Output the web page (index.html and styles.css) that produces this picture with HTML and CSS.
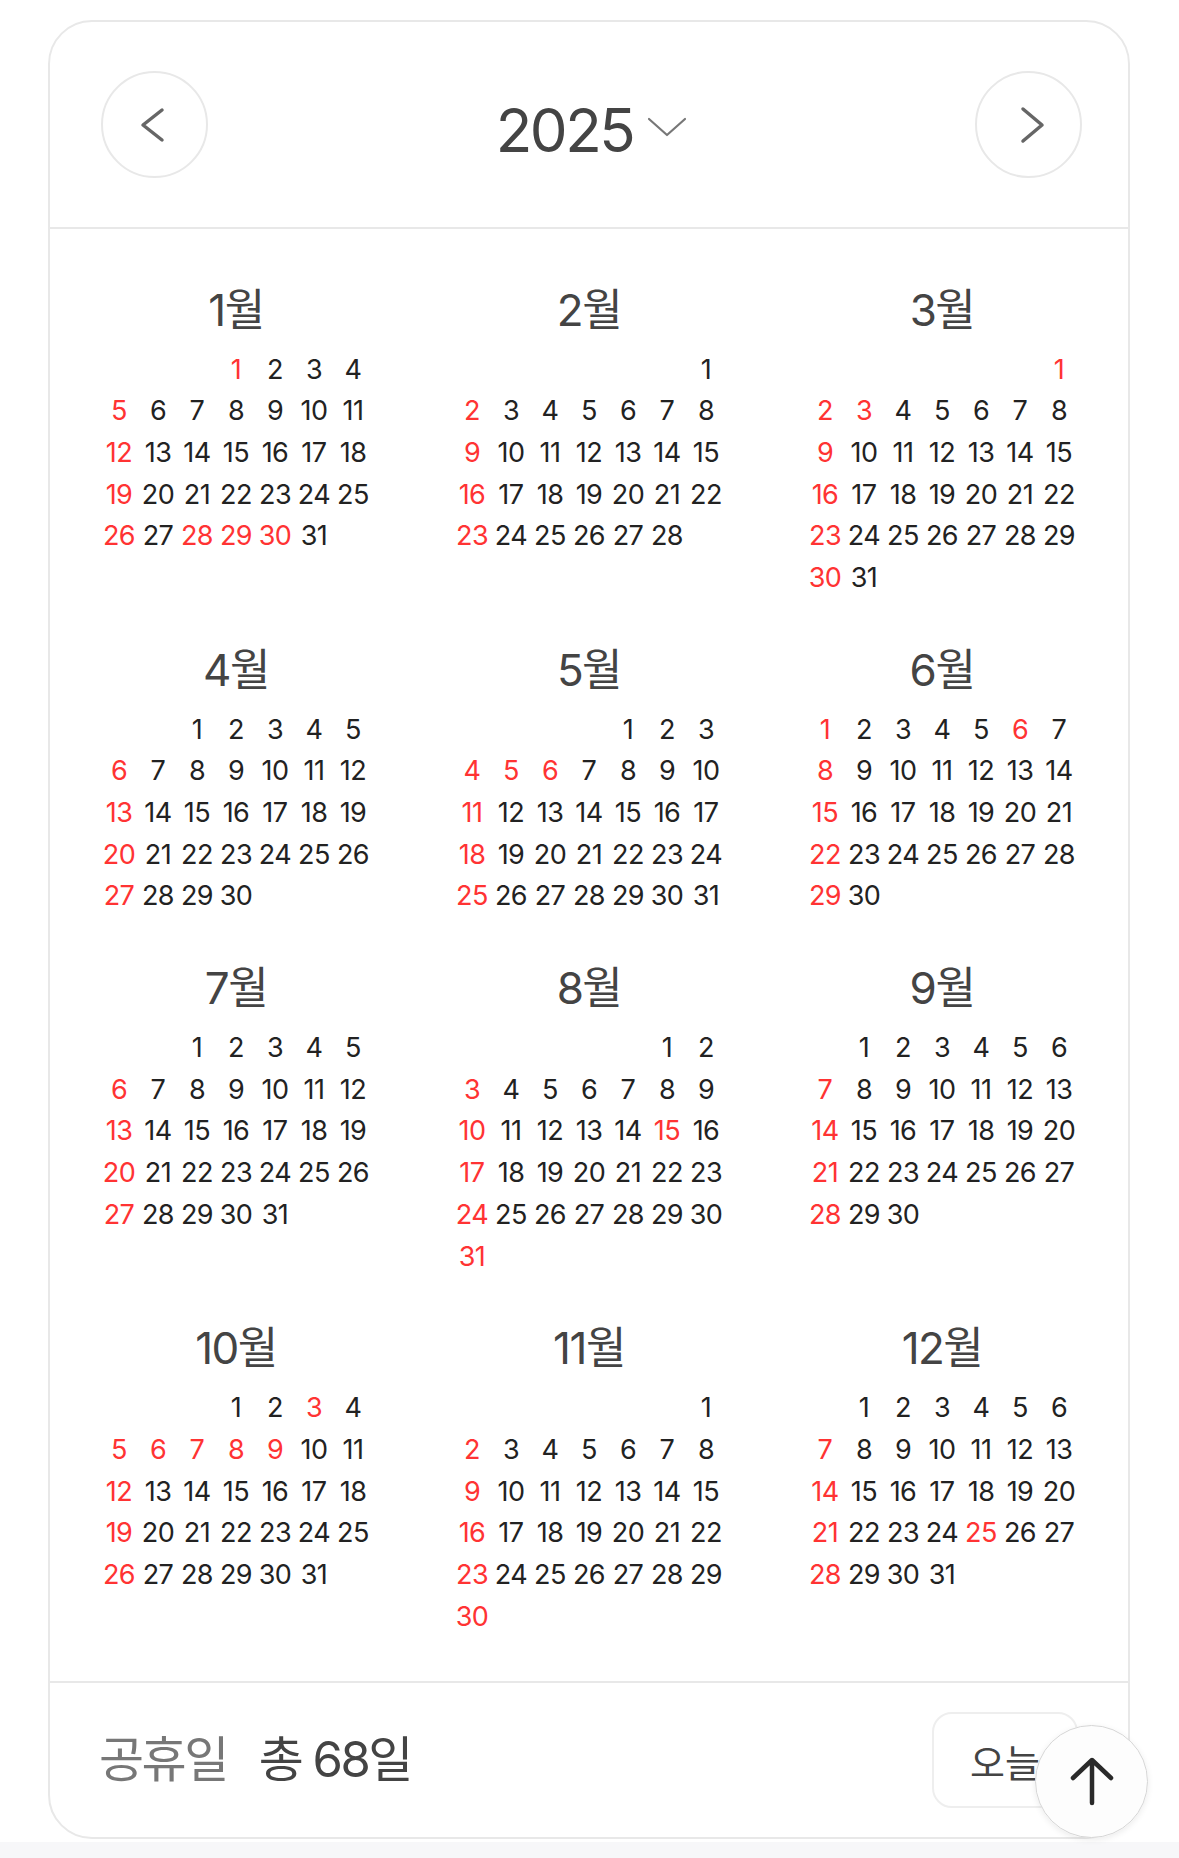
FILE: index.html
```html
<!DOCTYPE html>
<html lang="ko">
<head>
<meta charset="utf-8">
<title>2025 달력</title>
<link rel="stylesheet" href="styles.css">
</head>
<body>
<div class="card">
  <header class="head">
    <button class="nav" aria-label="이전">
      <svg viewBox="0 0 103 103" width="103" height="103"><polyline points="59,37 40,52 59,67" /></svg>
    </button>
    <div class="year">
      <span class="year-num">2025</span>
      <svg class="caret" viewBox="0 0 40 20" width="40" height="20"><polyline points="2,2 20,18 38,2" /></svg>
    </div>
    <button class="nav" aria-label="다음">
      <svg viewBox="0 0 103 103" width="103" height="103"><polyline points="46,36 65,52 46,68" /></svg>
    </button>
  </header>

  <section class="months">
    <div class="month">
      <h2 class="mtitle">1월</h2>
      <ol class="days">
        <li></li><li></li><li></li><li class="r">1</li><li>2</li><li>3</li><li>4</li>
        <li class="r">5</li><li>6</li><li>7</li><li>8</li><li>9</li><li>10</li><li>11</li>
        <li class="r">12</li><li>13</li><li>14</li><li>15</li><li>16</li><li>17</li><li>18</li>
        <li class="r">19</li><li>20</li><li>21</li><li>22</li><li>23</li><li>24</li><li>25</li>
        <li class="r">26</li><li>27</li><li class="r">28</li><li class="r">29</li><li class="r">30</li><li>31</li>
      </ol>
    </div>
    <div class="month">
      <h2 class="mtitle">2월</h2>
      <ol class="days">
        <li></li><li></li><li></li><li></li><li></li><li></li><li>1</li>
        <li class="r">2</li><li>3</li><li>4</li><li>5</li><li>6</li><li>7</li><li>8</li>
        <li class="r">9</li><li>10</li><li>11</li><li>12</li><li>13</li><li>14</li><li>15</li>
        <li class="r">16</li><li>17</li><li>18</li><li>19</li><li>20</li><li>21</li><li>22</li>
        <li class="r">23</li><li>24</li><li>25</li><li>26</li><li>27</li><li>28</li>
      </ol>
    </div>
    <div class="month">
      <h2 class="mtitle">3월</h2>
      <ol class="days">
        <li></li><li></li><li></li><li></li><li></li><li></li><li class="r">1</li>
        <li class="r">2</li><li class="r">3</li><li>4</li><li>5</li><li>6</li><li>7</li><li>8</li>
        <li class="r">9</li><li>10</li><li>11</li><li>12</li><li>13</li><li>14</li><li>15</li>
        <li class="r">16</li><li>17</li><li>18</li><li>19</li><li>20</li><li>21</li><li>22</li>
        <li class="r">23</li><li>24</li><li>25</li><li>26</li><li>27</li><li>28</li><li>29</li>
        <li class="r">30</li><li>31</li>
      </ol>
    </div>

    <div class="month">
      <h2 class="mtitle">4월</h2>
      <ol class="days">
        <li></li><li></li><li>1</li><li>2</li><li>3</li><li>4</li><li>5</li>
        <li class="r">6</li><li>7</li><li>8</li><li>9</li><li>10</li><li>11</li><li>12</li>
        <li class="r">13</li><li>14</li><li>15</li><li>16</li><li>17</li><li>18</li><li>19</li>
        <li class="r">20</li><li>21</li><li>22</li><li>23</li><li>24</li><li>25</li><li>26</li>
        <li class="r">27</li><li>28</li><li>29</li><li>30</li>
      </ol>
    </div>
    <div class="month">
      <h2 class="mtitle">5월</h2>
      <ol class="days">
        <li></li><li></li><li></li><li></li><li>1</li><li>2</li><li>3</li>
        <li class="r">4</li><li class="r">5</li><li class="r">6</li><li>7</li><li>8</li><li>9</li><li>10</li>
        <li class="r">11</li><li>12</li><li>13</li><li>14</li><li>15</li><li>16</li><li>17</li>
        <li class="r">18</li><li>19</li><li>20</li><li>21</li><li>22</li><li>23</li><li>24</li>
        <li class="r">25</li><li>26</li><li>27</li><li>28</li><li>29</li><li>30</li><li>31</li>
      </ol>
    </div>
    <div class="month">
      <h2 class="mtitle">6월</h2>
      <ol class="days">
        <li class="r">1</li><li>2</li><li>3</li><li>4</li><li>5</li><li class="r">6</li><li>7</li>
        <li class="r">8</li><li>9</li><li>10</li><li>11</li><li>12</li><li>13</li><li>14</li>
        <li class="r">15</li><li>16</li><li>17</li><li>18</li><li>19</li><li>20</li><li>21</li>
        <li class="r">22</li><li>23</li><li>24</li><li>25</li><li>26</li><li>27</li><li>28</li>
        <li class="r">29</li><li>30</li>
      </ol>
    </div>

    <div class="month">
      <h2 class="mtitle">7월</h2>
      <ol class="days">
        <li></li><li></li><li>1</li><li>2</li><li>3</li><li>4</li><li>5</li>
        <li class="r">6</li><li>7</li><li>8</li><li>9</li><li>10</li><li>11</li><li>12</li>
        <li class="r">13</li><li>14</li><li>15</li><li>16</li><li>17</li><li>18</li><li>19</li>
        <li class="r">20</li><li>21</li><li>22</li><li>23</li><li>24</li><li>25</li><li>26</li>
        <li class="r">27</li><li>28</li><li>29</li><li>30</li><li>31</li>
      </ol>
    </div>
    <div class="month">
      <h2 class="mtitle">8월</h2>
      <ol class="days">
        <li></li><li></li><li></li><li></li><li></li><li>1</li><li>2</li>
        <li class="r">3</li><li>4</li><li>5</li><li>6</li><li>7</li><li>8</li><li>9</li>
        <li class="r">10</li><li>11</li><li>12</li><li>13</li><li>14</li><li class="r">15</li><li>16</li>
        <li class="r">17</li><li>18</li><li>19</li><li>20</li><li>21</li><li>22</li><li>23</li>
        <li class="r">24</li><li>25</li><li>26</li><li>27</li><li>28</li><li>29</li><li>30</li>
        <li class="r">31</li>
      </ol>
    </div>
    <div class="month">
      <h2 class="mtitle">9월</h2>
      <ol class="days">
        <li></li><li>1</li><li>2</li><li>3</li><li>4</li><li>5</li><li>6</li>
        <li class="r">7</li><li>8</li><li>9</li><li>10</li><li>11</li><li>12</li><li>13</li>
        <li class="r">14</li><li>15</li><li>16</li><li>17</li><li>18</li><li>19</li><li>20</li>
        <li class="r">21</li><li>22</li><li>23</li><li>24</li><li>25</li><li>26</li><li>27</li>
        <li class="r">28</li><li>29</li><li>30</li>
      </ol>
    </div>

    <div class="month">
      <h2 class="mtitle">10월</h2>
      <ol class="days">
        <li></li><li></li><li></li><li>1</li><li>2</li><li class="r">3</li><li>4</li>
        <li class="r">5</li><li class="r">6</li><li class="r">7</li><li class="r">8</li><li class="r">9</li><li>10</li><li>11</li>
        <li class="r">12</li><li>13</li><li>14</li><li>15</li><li>16</li><li>17</li><li>18</li>
        <li class="r">19</li><li>20</li><li>21</li><li>22</li><li>23</li><li>24</li><li>25</li>
        <li class="r">26</li><li>27</li><li>28</li><li>29</li><li>30</li><li>31</li>
      </ol>
    </div>
    <div class="month">
      <h2 class="mtitle">11월</h2>
      <ol class="days">
        <li></li><li></li><li></li><li></li><li></li><li></li><li>1</li>
        <li class="r">2</li><li>3</li><li>4</li><li>5</li><li>6</li><li>7</li><li>8</li>
        <li class="r">9</li><li>10</li><li>11</li><li>12</li><li>13</li><li>14</li><li>15</li>
        <li class="r">16</li><li>17</li><li>18</li><li>19</li><li>20</li><li>21</li><li>22</li>
        <li class="r">23</li><li>24</li><li>25</li><li>26</li><li>27</li><li>28</li><li>29</li>
        <li class="r">30</li>
      </ol>
    </div>
    <div class="month">
      <h2 class="mtitle">12월</h2>
      <ol class="days">
        <li></li><li>1</li><li>2</li><li>3</li><li>4</li><li>5</li><li>6</li>
        <li class="r">7</li><li>8</li><li>9</li><li>10</li><li>11</li><li>12</li><li>13</li>
        <li class="r">14</li><li>15</li><li>16</li><li>17</li><li>18</li><li>19</li><li>20</li>
        <li class="r">21</li><li>22</li><li>23</li><li>24</li><li class="r">25</li><li>26</li><li>27</li>
        <li class="r">28</li><li>29</li><li>30</li><li>31</li>
      </ol>
    </div>
  </section>

  <footer class="foot">
    <p class="summary"><span class="label">공휴일</span><span class="total">총 68일</span></p>
    <button class="today">오늘</button>
  </footer>

  <button class="to-top" aria-label="맨 위로">
    <svg viewBox="0 0 113 113" width="113" height="113"><path d="M57 36 V78 M38 53 L57 35 L76 53" /></svg>
  </button>
</div>
<div class="page-bottom"></div>
</body>
</html>
```

FILE: styles.css
```css
* { box-sizing: border-box; }

html, body {
  margin: 0;
  padding: 0;
  background: #ffffff;
}

body {
  font-family: Inter, "Noto Sans CJK KR", sans-serif;
  color: #222;
}

.card {
  position: relative;
  width: 1082px;
  margin: 20px 0 0 48px;
  border: 2px solid #e8e8e8;
  border-radius: 44px;
  background: #fff;
}

/* header */
.head {
  height: 207px;
  display: flex;
  align-items: center;
  justify-content: space-between;
  padding: 0 46px 0 51px;
  border-bottom: 2px solid #e8e8e8;
}

.nav {
  width: 107px;
  height: 107px;
  padding: 0;
  border: 2px solid #e8e8e8;
  border-radius: 50%;
  background: #fff;
  display: flex;
  align-items: center;
  justify-content: center;
}

.nav svg {
  display: block;
  fill: none;
  stroke: #666;
  stroke-width: 3.5;
  stroke-linecap: round;
  stroke-linejoin: round;
}

.year {
  display: flex;
  align-items: center;
  gap: 14px;
  margin-top: 10px;
}

.year-num {
  font-family: Inter, sans-serif;
  font-size: 60px;
  line-height: 60px;
  letter-spacing: -2.5px;
  color: #444;
}

.caret {
  display: block;
  margin-top: -6px;
  fill: none;
  stroke: #777;
  stroke-width: 2.2;
  stroke-linecap: round;
  stroke-linejoin: round;
}

/* months */
.months {
  display: grid;
  grid-template-columns: repeat(3, 273px);
  justify-content: center;
  column-gap: 80px;
  row-gap: 43.5px;
  padding: 53px 0 44px;
  border-bottom: 2px solid #e8e8e8;
}

.mtitle {
  margin: 3.5px 0 15px;
  text-align: center;
  font-family: Inter, "Noto Sans CJK KR", sans-serif;
  font-size: 44px;
  line-height: 48px;
  font-weight: 400;
  letter-spacing: -1.5px;
  color: #444;
}

.days {
  list-style: none;
  margin: 0;
  padding: 0;
  display: grid;
  grid-template-columns: repeat(7, 39px);
  grid-auto-rows: 41.7px;
}

.days li {
  text-align: center;
  font-size: 27px;
  line-height: 41.7px;
  letter-spacing: -0.5px;
  color: #222;
  white-space: nowrap;
}

.days li.r {
  color: #ff3333;
}

/* footer */
.foot {
  height: 154px;
  display: flex;
  align-items: center;
  justify-content: space-between;
  padding: 0 50px 0 49px;
}

.summary {
  margin: 0;
  font-size: 49px;
  line-height: 60px;
  letter-spacing: -2.5px;
}

.label {
  color: #777;
  margin-right: 32px;
}

.total {
  color: #444;
}

.today {
  width: 146px;
  height: 96px;
  border: 2px solid #eeeeee;
  border-radius: 20px;
  background: #fff;
  font-family: Inter, "Noto Sans CJK KR", sans-serif;
  font-size: 38px;
  color: #444;
  padding: 0;
}

.to-top {
  position: absolute;
  left: 985px;
  top: 1703px;
  width: 113px;
  height: 113px;
  padding: 0;
  border: 1px solid #d6d6d6;
  border-radius: 50%;
  background: rgba(253, 253, 253, 0.97);
  box-shadow: 0 2px 6px rgba(0, 0, 0, 0.08);
}

.to-top svg {
  display: block;
  margin: -1px;
  fill: none;
  stroke: #2a2a2a;
  stroke-width: 4.5;
  stroke-linecap: round;
  stroke-linejoin: round;
}

.page-bottom {
  height: 20px;
  margin-top: 3px;
  background: #f7f7f9;
}
```
